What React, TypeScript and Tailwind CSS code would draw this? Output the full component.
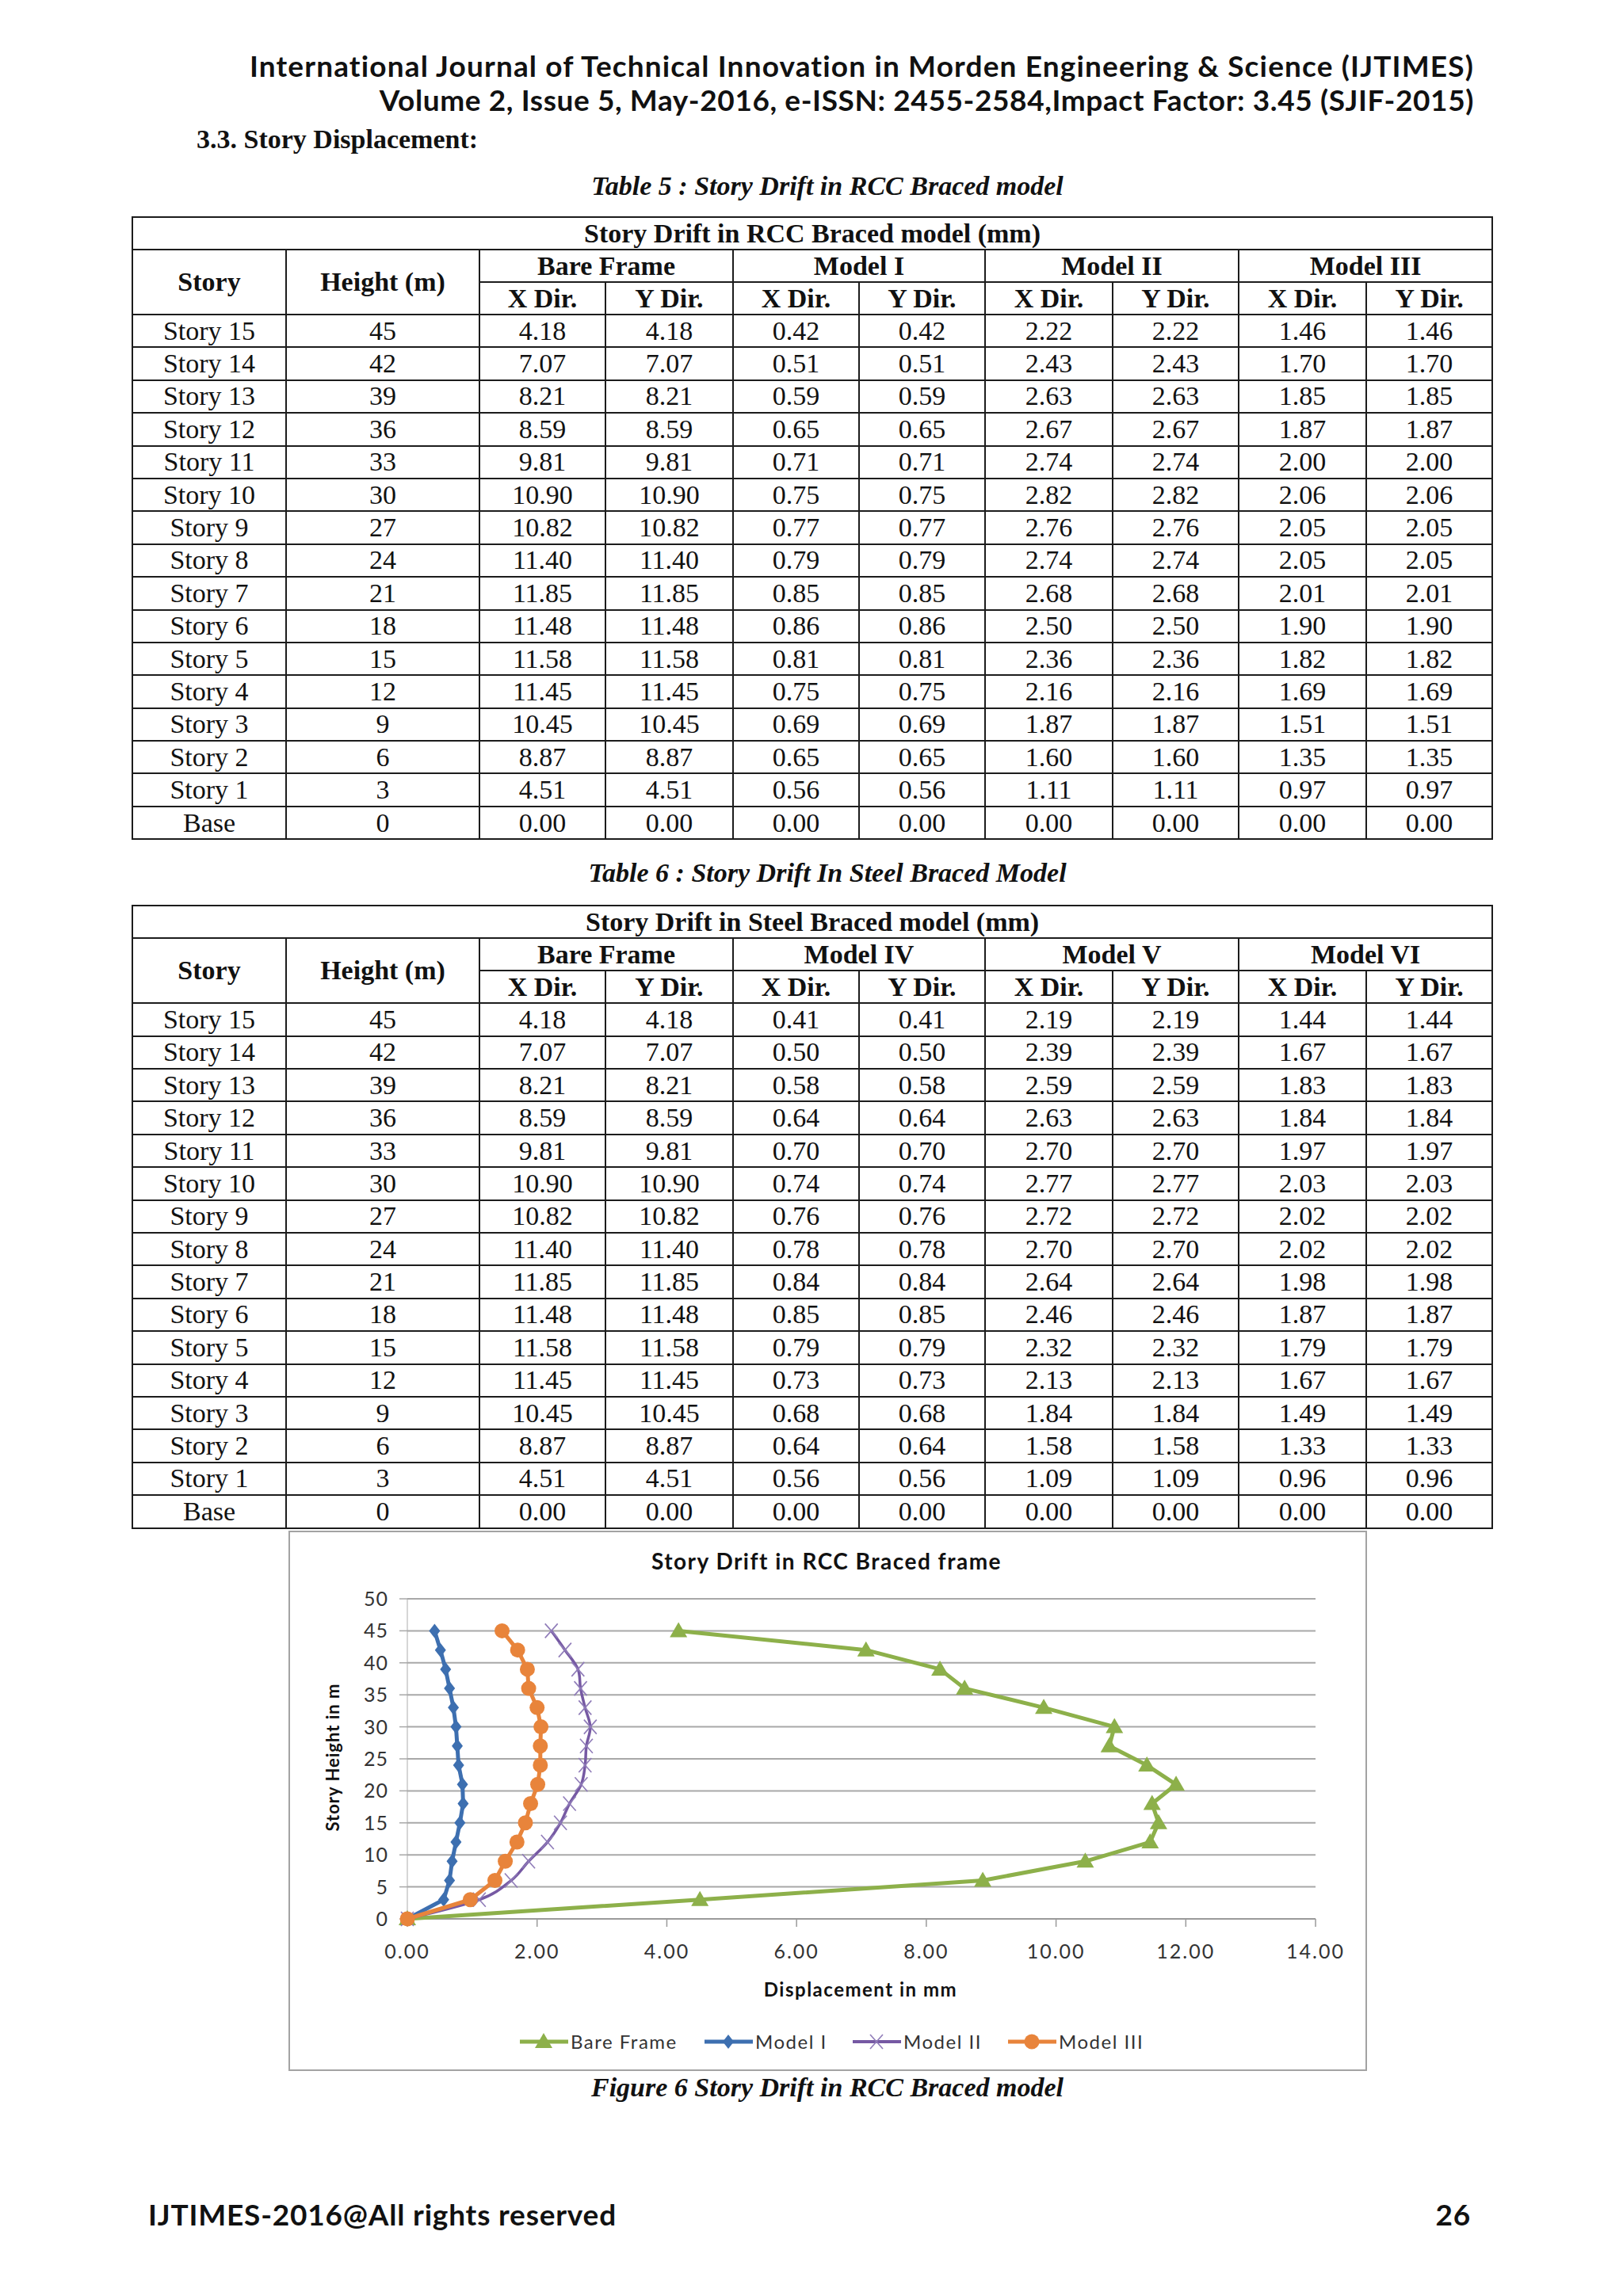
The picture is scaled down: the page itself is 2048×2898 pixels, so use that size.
import React from "react";

const heights = [45, 42, 39, 36, 33, 30, 27, 24, 21, 18, 15, 12, 9, 6, 3, 0];
const storyNames = [
  "Story 15", "Story 14", "Story 13", "Story 12", "Story 11", "Story 10", "Story 9", "Story 8",
  "Story 7", "Story 6", "Story 5", "Story 4", "Story 3", "Story 2", "Story 1", "Base",
];

const bare = ["4.18", "7.07", "8.21", "8.59", "9.81", "10.90", "10.82", "11.40", "11.85", "11.48", "11.58", "11.45", "10.45", "8.87", "4.51", "0.00"];

const rccModels = [
  ["0.42", "0.51", "0.59", "0.65", "0.71", "0.75", "0.77", "0.79", "0.85", "0.86", "0.81", "0.75", "0.69", "0.65", "0.56", "0.00"],
  ["2.22", "2.43", "2.63", "2.67", "2.74", "2.82", "2.76", "2.74", "2.68", "2.50", "2.36", "2.16", "1.87", "1.60", "1.11", "0.00"],
  ["1.46", "1.70", "1.85", "1.87", "2.00", "2.06", "2.05", "2.05", "2.01", "1.90", "1.82", "1.69", "1.51", "1.35", "0.97", "0.00"],
];

const steelModels = [
  ["0.41", "0.50", "0.58", "0.64", "0.70", "0.74", "0.76", "0.78", "0.84", "0.85", "0.79", "0.73", "0.68", "0.64", "0.56", "0.00"],
  ["2.19", "2.39", "2.59", "2.63", "2.70", "2.77", "2.72", "2.70", "2.64", "2.46", "2.32", "2.13", "1.84", "1.58", "1.09", "0.00"],
  ["1.44", "1.67", "1.83", "1.84", "1.97", "2.03", "2.02", "2.02", "1.98", "1.87", "1.79", "1.67", "1.49", "1.33", "0.96", "0.00"],
];

const colWidths = ["w-[194px]", "w-[244px]", "w-[159px]", "w-[161px]", "w-[159px]", "w-[159px]", "w-[161px]", "w-[159px]", "w-[161px]", "w-[159px]"];

const cell = "border-2 border-[#1c1c1c] text-center align-middle p-0";

function DriftTable({ title, modelNames, models }: { title: string; modelNames: string[]; models: string[][] }) {
  return (
    <table className="table-fixed border-collapse w-[1716px] text-[34px] leading-[36px] text-[#111]">
      <colgroup>
        {colWidths.map((w, i) => (
          <col key={i} className={w} />
        ))}
      </colgroup>
      <thead>
        <tr className="h-[41px]">
          <th colSpan={10} className={cell + " font-bold"}>{title}</th>
        </tr>
        <tr className="h-[41px]">
          <th rowSpan={2} className={cell + " font-bold"}>Story</th>
          <th rowSpan={2} className={cell + " font-bold"}>Height (m)</th>
          <th colSpan={2} className={cell + " font-bold"}>Bare Frame</th>
          {modelNames.map((m) => (
            <th key={m} colSpan={2} className={cell + " font-bold"}>{m}</th>
          ))}
        </tr>
        <tr className="h-[41px]">
          {[0, 1, 2, 3].map((i) => (
            <React.Fragment key={i}>
              <th className={cell + " font-bold"}>X Dir.</th>
              <th className={cell + " font-bold"}>Y Dir.</th>
            </React.Fragment>
          ))}
        </tr>
      </thead>
      <tbody>
        {storyNames.map((s, r) => (
          <tr key={s} className="h-[41.4px]">
            <td className={cell}>{s}</td>
            <td className={cell}>{heights[r]}</td>
            <td className={cell}>{bare[r]}</td>
            <td className={cell}>{bare[r]}</td>
            {models.map((m, k) => (
              <React.Fragment key={k}>
                <td className={cell}>{m[r]}</td>
                <td className={cell}>{m[r]}</td>
              </React.Fragment>
            ))}
          </tr>
        ))}
      </tbody>
    </table>
  );
}

// chart geometry, in px relative to the chart box
const X0 = 150;
const XU = 81.86;
const Y0 = 490;
const YU = 8.08;
const px = (v: number) => X0 + v * XU;
const py = (h: number) => Y0 - h * YU;

const GREEN = "#8db04a";
const BLUE = "#3d6fb0";
const PURPLE = "#7659a3";
const ORANGE = "#e8843b";

function pts(vals: string[]) {
  return vals.map((v, i) => [px(parseFloat(v)), py(heights[i])] as [number, number]);
}

function smooth(p: [number, number][]) {
  let d = `M${p[0][0]},${p[0][1]}`;
  for (let i = 0; i < p.length - 1; i++) {
    const a = p[i - 1] || p[i];
    const b = p[i];
    const c = p[i + 1];
    const e = p[i + 2] || c;
    const c1x = b[0] + (c[0] - a[0]) / 6;
    const c1y = b[1] + (c[1] - a[1]) / 6;
    const c2x = c[0] - (e[0] - b[0]) / 6;
    const c2y = c[1] - (e[1] - b[1]) / 6;
    d += ` C${c1x},${c1y} ${c2x},${c2y} ${c[0]},${c[1]}`;
  }
  return d;
}

function Tri({ x, y }: { x: number; y: number }) {
  return <polygon points={`${x},${y - 11} ${x + 11},${y + 8} ${x - 11},${y + 8}`} fill={GREEN} />;
}
function Dia({ x, y }: { x: number; y: number }) {
  return <polygon points={`${x},${y - 9} ${x + 7},${y} ${x},${y + 9} ${x - 7},${y}`} fill={BLUE} />;
}
function Cross({ x, y }: { x: number; y: number }) {
  return (
    <g stroke="#8f7bb8" strokeWidth={1.6}>
      <line x1={x - 8} y1={y - 9} x2={x + 8} y2={y + 9} />
      <line x1={x - 8} y1={y + 9} x2={x + 8} y2={y - 9} />
    </g>
  );
}
function Dot({ x, y }: { x: number; y: number }) {
  return <circle cx={x} cy={y} r={9.5} fill={ORANGE} />;
}

function DriftChart() {
  const g = pts(bare);
  const b = pts(rccModels[0]);
  const p = pts(rccModels[1]);
  const o = pts(rccModels[2]);
  const line = (q: [number, number][]) => q.map((t) => t.join(",")).join(" ");
  const font = { fontFamily: "Lato, 'Open Sans', sans-serif" };

  return (
    <svg width={1357} height={678} viewBox="2 2 1357 678" className="block" style={font}>
      <text x={679} y={49} textAnchor="middle" fontSize={28} fontWeight={700} letterSpacing={1.5} fill="#111">
        Story Drift in RCC Braced frame
      </text>

      {/* grid */}
      <line x1={X0} y1={py(50)} x2={X0} y2={Y0} stroke="#c8c8c8" strokeWidth={1.5} />
      {[5, 10, 15, 20, 25, 30, 35, 40, 45, 50].map((h) => (
        <line key={h} x1={X0} y1={py(h)} x2={px(14)} y2={py(h)} stroke="#a8a8a8" strokeWidth={2} />
      ))}
      {[0, 5, 10, 15, 20, 25, 30, 35, 40, 45, 50].map((h) => (
        <g key={h}>
          <line x1={X0 - 10} y1={py(h)} x2={X0} y2={py(h)} stroke="#a8a8a8" strokeWidth={1.5} />
          <text x={126} y={py(h) + 9} textAnchor="end" fontSize={25} letterSpacing={1} fill="#333">
            {h}
          </text>
        </g>
      ))}
      <line x1={X0} y1={Y0} x2={px(14)} y2={Y0} stroke="#9a9a9a" strokeWidth={2} />
      {[0, 2, 4, 6, 8, 10, 12, 14].map((v) => (
        <g key={v}>
          <line x1={px(v)} y1={Y0} x2={px(v)} y2={Y0 + 10} stroke="#9a9a9a" strokeWidth={1.5} />
          <text x={px(v)} y={540} textAnchor="middle" fontSize={25} letterSpacing={2} fill="#333">
            {v.toFixed(2)}
          </text>
        </g>
      ))}

      <text x={722} y={588} textAnchor="middle" fontSize={24} fontWeight={700} letterSpacing={1.5} fill="#111">
        Displacement in mm
      </text>
      <text
        x={0}
        y={0}
        transform="translate(64 286) rotate(-90)"
        textAnchor="middle"
        fontSize={22}
        fontWeight={700}
        letterSpacing={1}
        fill="#111"
      >
        Story Height in m
      </text>

      {/* series */}
      <polyline points={line(g)} fill="none" stroke={GREEN} strokeWidth={5} strokeLinejoin="round" />
      {g.map(([x, y], i) => <Tri key={i} x={x} y={y} />)}
      <polyline points={line(b)} fill="none" stroke={BLUE} strokeWidth={5} strokeLinejoin="round" />
      {b.map(([x, y], i) => <Dia key={i} x={x} y={y} />)}
      <path d={smooth(p)} fill="none" stroke={PURPLE} strokeWidth={3.5} />
      {p.map(([x, y], i) => <Cross key={i} x={x} y={y} />)}
      <polyline points={line(o)} fill="none" stroke={ORANGE} strokeWidth={5} strokeLinejoin="round" />
      {o.map(([x, y], i) => <Dot key={i} x={x} y={y} />)}

      {/* legend */}
      <line x1={292} y1={645} x2={353} y2={645} stroke={GREEN} strokeWidth={5} />
      <Tri x={322} y={645} />
      <text x={356} y={654} fontSize={24} letterSpacing={1.5} fill="#333">Bare Frame</text>
      <line x1={525} y1={645} x2={586} y2={645} stroke={BLUE} strokeWidth={5} />
      <Dia x={555} y={645} />
      <text x={589} y={654} fontSize={24} letterSpacing={1.5} fill="#333">Model I</text>
      <line x1={712} y1={645} x2={773} y2={645} stroke={PURPLE} strokeWidth={4} />
      <Cross x={742} y={645} />
      <text x={776} y={654} fontSize={24} letterSpacing={1.5} fill="#333">Model II</text>
      <line x1={908} y1={645} x2={969} y2={645} stroke={ORANGE} strokeWidth={5} />
      <Dot x={938} y={645} />
      <text x={972} y={654} fontSize={24} letterSpacing={1.5} fill="#333">Model III</text>
    </svg>
  );
}

export default function App() {
  return (
    <div className="w-[2048px] h-[2898px] bg-white text-[#111] font-['Liberation_Serif','Times_New_Roman',serif]">
      <div className="px-[166px] pt-[61px]">
        <div className="pr-[22px] text-right font-['Lato','Open_Sans',sans-serif] font-bold text-[37px] leading-[43px]">
          <p className="tracking-[1.15px]">International Journal of Technical Innovation in Morden Engineering &amp; Science (IJTIMES)</p>
          <p className="tracking-[0.6px]">Volume 2, Issue 5, May-2016, e-ISSN: 2455-2584,Impact Factor: 3.45 (SJIF-2015)</p>
        </div>

        <h3 className="mt-[9px] pl-[82px] text-[34px] leading-[40px] font-bold">3.3. Story Displacement:</h3>

        <p className="mt-[19px] pl-[40px] text-center text-[34px] leading-[40px] font-bold italic">
          Table 5 : Story Drift in RCC Braced model
        </p>
        <div className="mt-[18px]">
          <DriftTable
            title="Story Drift in RCC Braced model (mm)"
            modelNames={["Model I", "Model II", "Model III"]}
            models={rccModels}
          />
        </div>

        <p className="mt-[22px] pl-[40px] text-center text-[34px] leading-[40px] font-bold italic">
          Table 6 : Story Drift In Steel Braced Model
        </p>
        <div className="mt-[20px]">
          <DriftTable
            title="Story Drift in Steel Braced model (mm)"
            modelNames={["Model IV", "Model V", "Model VI"]}
            models={steelModels}
          />
        </div>

        <div className="mt-[2px] ml-[198px] w-[1361px] h-[682px] border-2 border-[#a3a3a3] bg-white">
          <DriftChart />
        </div>

        <p className="mt-[1px] pl-[40px] text-center text-[34px] leading-[40px] font-bold italic">
          Figure 6 Story Drift in RCC Braced model
        </p>

        <div className="mt-[118px] pl-[21px] pr-[26px] flex justify-between font-['Lato','Open_Sans',sans-serif] font-bold text-[37px] leading-[43px] tracking-[0.8px]">
          <span>IJTIMES-2016@All rights reserved</span>
          <span>26</span>
        </div>
      </div>
    </div>
  );
}
